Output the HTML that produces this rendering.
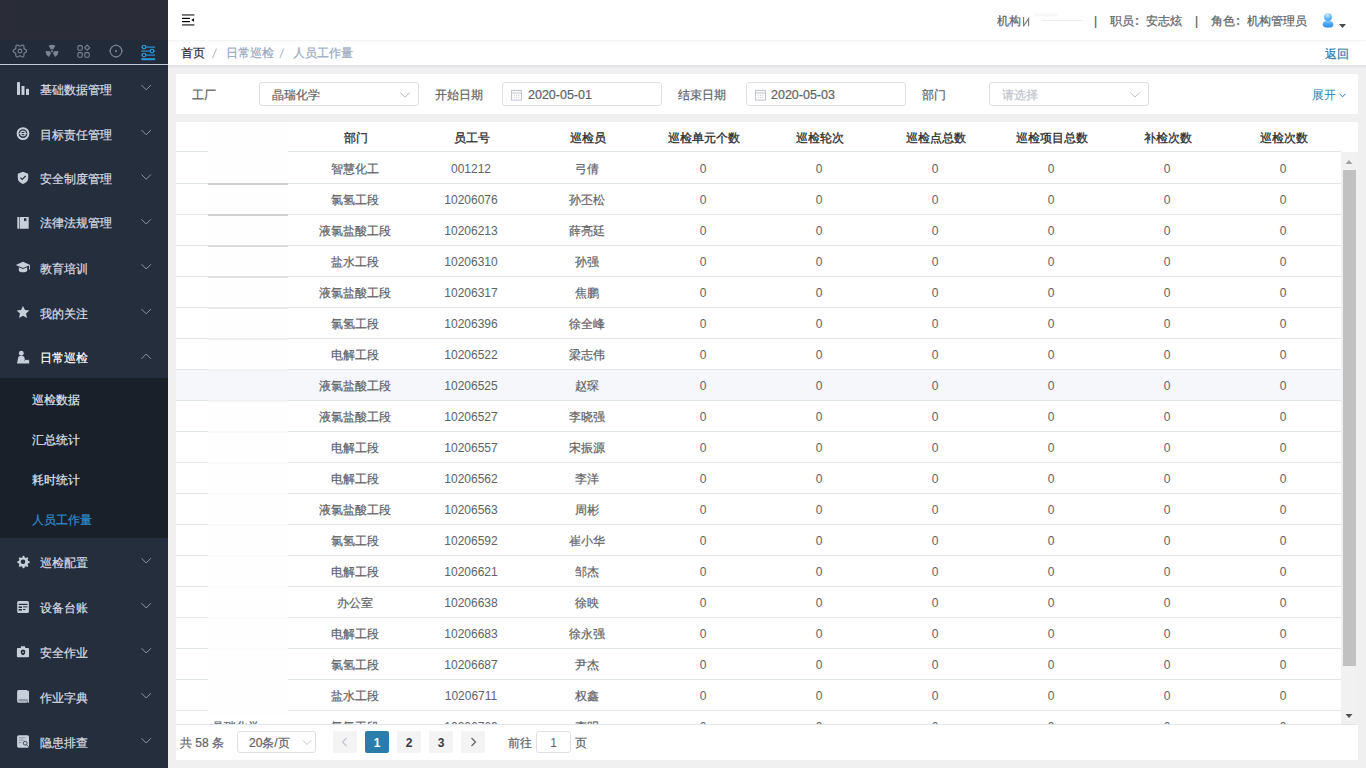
<!DOCTYPE html>
<html><head><meta charset="utf-8">
<style>
*{box-sizing:border-box;margin:0;padding:0}
html,body{width:1366px;height:768px;overflow:hidden;background:#f0f0f0;font-family:"Liberation Sans",sans-serif;font-size:12px;color:#606266}
#side{position:absolute;left:0;top:0;width:168px;height:768px;background:#252e3c;overflow:hidden}
#logo{position:absolute;left:0;top:0;width:168px;height:40px;background:#2a2d37}
#icons{position:absolute;left:0;top:40px;width:168px;height:24px;background:#222b39}
#iline{position:absolute;left:0;top:64px;width:168px;height:1px;background:#c3cad6}
.mi{position:absolute;left:0;width:168px;height:45px;color:#c9ced6}
.mi .t{position:absolute;left:40px;top:0;height:45px;line-height:45px;white-space:nowrap}
.ic{position:absolute;left:16px;width:14px;height:14px}
.ar{position:absolute;left:140px;width:12px;height:7px}
#sub{position:absolute;left:0;top:378px;width:168px;height:160px;background:#19202a}
.si{position:absolute;left:32px;height:40px;line-height:40px;color:#dfe3ea;white-space:nowrap}
#hdr{position:absolute;left:168px;top:0;width:1198px;height:40px;background:#fff}
#bc{position:absolute;left:168px;top:40px;width:1198px;height:25px;background:#fff;box-shadow:0 1px 2px rgba(0,0,0,.15)}
.ht{position:absolute;top:0;height:40px;line-height:40px;white-space:nowrap;color:#606266}
.bt{position:absolute;top:0;height:25px;line-height:25px;white-space:nowrap}
#fp{position:absolute;left:176px;top:74px;width:1182px;height:40px;background:#fff}
.lb{position:absolute;top:0;height:40px;line-height:40px;color:#606266;white-space:nowrap}
.inp{position:absolute;top:8px;width:160px;height:24px;border:1px solid #dcdfe6;border-radius:3px;background:#fff}
.inp .v{position:absolute;left:12px;top:0;line-height:22px;color:#606266;white-space:nowrap}
#tp{position:absolute;left:176px;top:122px;width:1182px;height:638px;background:#fff;overflow:hidden}
.hrow{position:absolute;left:0;top:0;width:1166px;height:29px}
.th{position:absolute;top:0;width:116px;height:29px;line-height:29px;text-align:center;font-weight:bold;color:#303133;white-space:nowrap}
.hline{position:absolute;left:0;top:29px;width:1166px;height:1px;background:#ebeef5}
.tr{position:absolute;left:0;width:1166px;background:#fff}
.tr.hov{background:#f5f7fa}
.td{position:absolute;top:0;width:116px;height:100%;line-height:30px;text-align:center;white-space:nowrap;color:#606266}
.td.c1{left:0;width:122px}
.rline{position:absolute;left:0;width:1166px;height:1px;background:#ebeef5}
#blur{position:absolute;left:32px;top:1px;width:80px;height:593px;background:#fefefe}
.sa{position:absolute;left:141px;top:8px}
.cal{position:absolute;left:7px;top:6px}
.dt{font-size:12.5px}
.mi .t{padding-top:3px}
.si{padding-top:2px}
.td{padding-top:1px}
.pgt{position:absolute;top:609px;height:22px;line-height:22px;white-space:nowrap;color:#606266;padding-top:1px}
.psel{position:absolute;left:61px;top:609px;width:79px;height:22px;border:1px solid #dcdfe6;border-radius:3px}
.psel .v{position:absolute;left:11px;top:0;line-height:20px;color:#606266;white-space:nowrap;padding-top:1px}
.pb{position:absolute;top:609px;width:24px;height:22px;line-height:22px;background:#f4f4f5;border-radius:2px;text-align:center;font-weight:bold;color:#303133;font-size:12px}
.pb svg{position:absolute;left:0;top:0}
.pb.act{background:#2a7cab;color:#fff}
.pin{position:absolute;left:360px;top:609px;width:35px;height:22px;line-height:20px;border:1px solid #dcdfe6;border-radius:3px;text-align:center;color:#606266}
#tbody{position:absolute;left:0;top:30px;width:1165px;height:572px;overflow:hidden}
.bl{position:absolute;left:0;width:80px;height:2px}
#bc{border-top:1px solid #f3f3f3}
.th{padding-top:2px}
.mi{color:#d9dde4}
.sa{left:139px}
.pb{padding-top:1px;color:#3a3b3d}
.pb.act{color:#fff}
.pin{padding-top:1px}
.td{margin-left:-1px}
.ht{padding-top:1px}

.bl{filter:blur(.7px);height:2px}
.th{font-weight:500;color:#2a2b2d;-webkit-text-stroke:.3px #2a2b2d}
.cl{display:inline-block;width:12px;text-indent:1px;font-weight:bold;color:#707276}
.lb{padding-top:1px}
.inp .v{padding-top:1px}
.td,.lb,.ht,.bt,.si,.mi .t,.pgt,.inp .v,.psel .v,.pin{-webkit-text-stroke:.2px currentColor}
#bc{box-shadow:none;border-top:1px solid #f3f4f4;background:linear-gradient(#f9fafa,#fff 3px)}
#shd{position:absolute;left:168px;top:65px;width:1198px;height:3px;background:linear-gradient(#dde2e9 0,#dde2e9 1px,#e4e4e4 1px,#e4e4e4 2px,#ebebeb 2px)}
.rline,.hline{background:#e1e6ec}
.td.n,.dt,.pin{-webkit-text-stroke:0}

</style></head><body>
<div id="side">
<div id="logo"><div style="position:absolute;left:21px;top:5px;width:54px;height:24px;background:#282c36;box-shadow:0 0 3px 1px #292d37"></div></div>
<div id="icons"></div>
<div id="iline"></div>
<div class="mi" style="top:65px"><div class="t">基础数据管理</div></div>
<div class="mi" style="top:110px"><div class="t">目标责任管理</div></div>
<div class="mi" style="top:154px"><div class="t">安全制度管理</div></div>
<div class="mi" style="top:198px"><div class="t">法律法规管理</div></div>
<div class="mi" style="top:244px"><div class="t">教育培训</div></div>
<div class="mi" style="top:289px"><div class="t">我的关注</div></div>
<div class="mi" style="top:333px;color:#fff"><div class="t">日常巡检</div></div>
<div id="sub">
<div class="si" style="top:0">巡检数据</div>
<div class="si" style="top:40px">汇总统计</div>
<div class="si" style="top:80px">耗时统计</div>
<div class="si" style="top:120px;color:#2d8dcd">人员工作量</div>
</div>
<div class="mi" style="top:538px"><div class="t">巡检配置</div></div>
<div class="mi" style="top:583px"><div class="t">设备台账</div></div>
<div class="mi" style="top:628px"><div class="t">安全作业</div></div>
<div class="mi" style="top:673px"><div class="t">作业字典</div></div>
<div class="mi" style="top:718px"><div class="t">隐患排查</div></div>
<svg width="168" height="768" viewBox="0 0 168 768" style="position:absolute;left:0;top:0">
<!-- top icon row -->
<path d="M26.60 51.00 L26.54 51.35 L26.38 51.68 L26.13 51.99 L25.81 52.26 L25.45 52.49 L25.09 52.69 L24.75 52.86 L24.45 53.03 L24.22 53.20 L24.06 53.40 L23.96 53.64 L23.93 53.93 L23.93 54.27 L23.95 54.65 L23.97 55.07 L23.94 55.49 L23.87 55.90 L23.73 56.27 L23.52 56.58 L23.25 56.80 L22.92 56.93 L22.55 56.96 L22.16 56.89 L21.77 56.75 L21.39 56.55 L21.03 56.34 L20.71 56.13 L20.42 55.95 L20.15 55.84 L19.90 55.80 L19.65 55.84 L19.38 55.95 L19.09 56.13 L18.77 56.34 L18.41 56.55 L18.03 56.75 L17.64 56.89 L17.25 56.96 L16.88 56.93 L16.55 56.80 L16.28 56.58 L16.07 56.27 L15.93 55.90 L15.86 55.49 L15.83 55.07 L15.85 54.65 L15.87 54.27 L15.87 53.93 L15.84 53.64 L15.74 53.40 L15.58 53.20 L15.35 53.03 L15.05 52.86 L14.71 52.69 L14.35 52.49 L13.99 52.26 L13.67 51.99 L13.42 51.68 L13.26 51.35 L13.20 51.00 L13.26 50.65 L13.42 50.32 L13.67 50.01 L13.99 49.74 L14.35 49.51 L14.71 49.31 L15.05 49.14 L15.35 48.97 L15.58 48.80 L15.74 48.60 L15.84 48.36 L15.87 48.07 L15.87 47.73 L15.85 47.35 L15.83 46.93 L15.86 46.51 L15.93 46.10 L16.07 45.73 L16.28 45.42 L16.55 45.20 L16.88 45.07 L17.25 45.04 L17.64 45.11 L18.03 45.25 L18.41 45.45 L18.77 45.66 L19.09 45.87 L19.38 46.05 L19.65 46.16 L19.90 46.20 L20.15 46.16 L20.42 46.05 L20.71 45.87 L21.03 45.66 L21.39 45.45 L21.77 45.25 L22.16 45.11 L22.55 45.04 L22.92 45.07 L23.25 45.20 L23.52 45.42 L23.73 45.73 L23.87 46.10 L23.94 46.51 L23.97 46.93 L23.95 47.35 L23.93 47.73 L23.93 48.07 L23.96 48.36 L24.06 48.60 L24.22 48.80 L24.45 48.97 L24.75 49.14 L25.09 49.31 L25.45 49.51 L25.81 49.74 L26.13 50.01 L26.38 50.32 L26.54 50.65 L26.60 51.00Z" fill="none" stroke="#7b8493" stroke-width="1.15"/>
<circle cx="19.9" cy="51" r="1.9" fill="none" stroke="#7b8493" stroke-width="1.1"/>
<path d="M48.61 45.87A6.40 6.40 0 0 1 55.39 45.87L53.01 49.69A1.90 1.90 0 0 0 50.99 49.69ZM49.00 56.95A6.40 6.40 0 0 1 45.60 51.08L50.10 51.23A1.90 1.90 0 0 0 51.11 52.98ZM58.40 51.08A6.40 6.40 0 0 1 55.00 56.95L52.89 52.98A1.90 1.90 0 0 0 53.90 51.23Z" fill="#7b8493"/>
<rect x="51.1" y="50.4" width="1.8" height="1.8" fill="#7b8493"/>
<g fill="none" stroke="#7b8493" stroke-width="1.1">
<rect x="77.9" y="45.6" width="4.4" height="4.6" rx="1.2"/>
<rect x="77.9" y="52.6" width="4.4" height="4.6" rx="1.2"/>
<rect x="84.8" y="52.6" width="4.4" height="4.6" rx="1.2"/>
<path d="M87.2 45.1l2.5 2.6-2.5 2.6-2.5-2.6z"/>
<circle cx="116" cy="51.1" r="5.8"/>
</g>
<g fill="#7b8493">
<circle cx="116" cy="51.1" r="1.1"/>
<rect x="115.5" y="44.4" width="1" height="1.2"/><rect x="115.5" y="56.6" width="1" height="1.2"/>
<rect x="109.3" y="50.6" width="1.2" height="1"/><rect x="121.5" y="50.6" width="1.2" height="1"/>
</g>
<g fill="#2a6f9e">
<rect x="141.3" y="46.2" width="13.8" height="1.8"/><rect x="141.3" y="50.2" width="13.8" height="1.8"/><rect x="141.3" y="54.2" width="13.8" height="1.8"/>
</g>
<g fill="#222b39" stroke="#2e9ee0" stroke-width="1.1">
<circle cx="144" cy="47.1" r="1.8"/><circle cx="152" cy="51.1" r="1.8"/><circle cx="144" cy="55.1" r="1.8"/>
</g>
<rect x="141.3" y="58.2" width="13.8" height="2" fill="#2b9ad8"/>
<!-- menu icons -->
<g fill="#c7cfda">
<rect x="17" y="82" width="3" height="13" rx=".4"/><rect x="21.5" y="86" width="3" height="9" rx=".4"/><rect x="26" y="88.8" width="3" height="6.2" rx=".4"/>
</g>
<g>
<circle cx="23" cy="133.6" r="5.4" fill="none" stroke="#c7cfda" stroke-width="2"/>
<circle cx="23" cy="133.6" r="2.4" fill="none" stroke="#c7cfda" stroke-width="1.2"/>
<path d="M19.2 133.6h7.6" stroke="#c7cfda" stroke-width="1.1"/>
</g>
<path d="M23 171.8l5.2 1.9v4.4c0 3.2-2.3 5-5.2 6-2.9-1-5.2-2.8-5.2-6v-4.4z" fill="#c7cfda"/>
<path d="M20.3 177.6l1.9 1.8 3.5-3.4" fill="none" stroke="#252e3c" stroke-width="1.2"/>
<g fill="#c7cfda">
<rect x="17.3" y="217" width="2" height="11.8" rx=".5"/>
<rect x="19.8" y="217" width="8.9" height="11.8" rx=".6"/>
</g>
<path d="M24 218.2v3.2l1.2-.9 1.2.9v-3.2" fill="#252e3c"/>
<g fill="#c7cfda">
<path d="M23 261.7l7.2 3.2-7.2 3.2-7.2-3.2z"/>
<path d="M18.8 267.2v3.6c1.2 2 7.2 2 8.4 0v-3.6l-4.2 1.9z"/>
<rect x="29.1" y="265" width=".9" height="4.6"/>
</g>
<path d="M23 305.9l1.95 4.1 4.35.5-3.25 3 .9 4.4-3.95-2.2-3.95 2.2.9-4.4-3.25-3 4.35-.5z" fill="#c7cfda"/>
<g fill="#c7cfda">
<circle cx="21.3" cy="353.2" r="2.4"/>
<path d="M17 363.5l1.3-6.3c.4-1 1.4-1.5 3-1.5s2.6.5 3 1.5l.6 2.5h4.3v3.8z"/>
</g>
<path d="M24.5 360.5l1.5-1.6 2.6 1.2" fill="none" stroke="#252e3c" stroke-width=".8"/>
<path d="M23 555.7l1.3.3.4 1.4 1.3.6 1.3-.7 1 1-.7 1.3.6 1.3 1.4.4v1.6l-1.4.4-.6 1.3.7 1.3-1 1-1.3-.7-1.3.6-.4 1.4h-1.6l-.4-1.4-1.3-.6-1.3.7-1-1 .7-1.3-.6-1.3-1.4-.4v-1.6l1.4-.4.6-1.3-.7-1.3 1-1 1.3.7 1.3-.6.4-1.4z" fill="#c7cfda"/>
<circle cx="23" cy="561.8" r="2.3" fill="#252e3c"/>
<rect x="17.2" y="600.9" width="11.7" height="12.1" rx="1.5" fill="#c7cfda"/>
<g fill="#252e3c"><rect x="18.6" y="603.8" width="8.9" height="1.2"/><rect x="18.6" y="606.4" width="3.4" height="1.6"/><rect x="18.6" y="609" width="3.4" height="1.6"/><rect x="23" y="606.4" width="4.5" height="1"/><rect x="23" y="609" width="2.5" height="1"/></g>
<g fill="#c7cfda"><rect x="16.9" y="648" width="12.1" height="9.2" rx="1"/><rect x="20.8" y="646.3" width="4.4" height="2.5" rx=".5"/></g>
<path d="M23 649.6l2.2.8v2c0 1.5-1 2.3-2.2 2.8-1.2-.5-2.2-1.3-2.2-2.8v-2z" fill="#252e3c"/>
<circle cx="23" cy="652.3" r=".8" fill="#c7cfda"/>
<g fill="#c7cfda"><rect x="17.1" y="689.9" width="10.9" height="12.8" rx="1.6"/><rect x="28" y="690.8" width="1" height="11.9"/></g>
<rect x="18.4" y="699" width="9.8" height="2.4" rx="1" fill="#8e98a8"/>
<rect x="17.1" y="735.2" width="11.9" height="12.5" rx="1.6" fill="#c7cfda"/>
<g fill="#8e98a8"><rect x="18.8" y="737.3" width="6.8" height="1.1"/><rect x="18.8" y="739.6" width="5" height="1.1"/><rect x="18.8" y="742" width="3" height="1.1"/></g>
<circle cx="25.2" cy="743.2" r="1.9" fill="none" stroke="#3e4858" stroke-width="1"/>
<path d="M26.5 744.6l2 2" stroke="#3e4858" stroke-width="1"/>
<!-- chevrons -->
<g fill="none" stroke="#8d95a1" stroke-width="1">
<path d="M141.5 85l4.7 4.8 4.7-4.8"/>
<path d="M141.5 130l4.7 4.8 4.7-4.8"/>
<path d="M141.5 174.5l4.7 4.8 4.7-4.8"/>
<path d="M141.5 219.3l4.7 4.8 4.7-4.8"/>
<path d="M141.5 264.2l4.7 4.8 4.7-4.8"/>
<path d="M141.5 309l4.7 4.8 4.7-4.8"/>
<path d="M141.5 358.8l4.7-4.8 4.7 4.8"/>
<path d="M141.5 558.2l4.7 4.8 4.7-4.8"/>
<path d="M141.5 603.2l4.7 4.8 4.7-4.8"/>
<path d="M141.5 648.2l4.7 4.8 4.7-4.8"/>
<path d="M141.5 693.2l4.7 4.8 4.7-4.8"/>
<path d="M141.5 738.2l4.7 4.8 4.7-4.8"/>
</g>
</svg>
</div>
<div id="hdr">
<svg width="20" height="20" viewBox="0 0 20 20" style="position:absolute;left:12px;top:10px">
<rect x="2" y="4.2" width="12.4" height="1.5" fill="#555"/>
<rect x="2" y="7.8" width="8" height="1.2" fill="#000"/>
<rect x="2" y="11" width="8" height="1.2" fill="#000"/>
<path d="M14 8.2L11.3 10 14 11.8z" fill="#000"/>
<rect x="2" y="14.1" width="12.4" height="1.6" fill="#5a5a5a"/>
</svg>
<div class="ht" style="left:829px">机构</div>
<svg width="10" height="12" viewBox="0 0 10 12" style="position:absolute;left:854px;top:16px"><path d="M1.6 1v9.4M1.6 10l5-7.4v7.6" fill="none" stroke="#777" stroke-width="1.1"/></svg>
<div style="position:absolute;left:866px;top:14px;width:24px;height:2px;background:#f2f2f2;filter:blur(1px)"></div>
<div style="position:absolute;left:874px;top:20px;width:40px;height:1px;background:#ececec;filter:blur(.6px)"></div>
<div class="ht" style="left:926px;color:#555">|</div>
<div class="ht" style="left:942px">职员<span class="cl">:</span>安志炫</div>
<div class="ht" style="left:1027px;color:#555">|</div>
<div class="ht" style="left:1043px">角色<span class="cl">:</span>机构管理员</div>
<svg width="30" height="20" viewBox="0 0 30 20" style="position:absolute;left:1152px;top:10px">
<defs><radialGradient id="ug1" cx=".45" cy=".25" r=".8"><stop offset="0" stop-color="#d8f0ff"/><stop offset=".5" stop-color="#6cc0fa"/><stop offset="1" stop-color="#3994f0"/></radialGradient>
<linearGradient id="ug2" x1="0" y1="0" x2="0" y2="1"><stop offset="0" stop-color="#8fd2ff"/><stop offset=".45" stop-color="#4aa6f6"/><stop offset="1" stop-color="#2f8cf2"/></linearGradient></defs>
<path d="M2.7 14.6C2.7 11.6 5 10.5 8 10.5S13.3 11.6 13.3 14.6 11 17.7 8 17.7 2.7 17 2.7 14.6z" fill="url(#ug2)"/>
<circle cx="8" cy="7.1" r="3.9" fill="url(#ug1)"/>
<path d="M19 14.1h7l-3.5 3.9z" fill="#4a4a4a"/>
</svg>
</div>
<div id="bc">
<div class="bt" style="left:13px;color:#2b2b2b">首页</div>
<svg width="80" height="25" viewBox="0 0 80 25" style="position:absolute;left:40px;top:0"><path d="M8.5 7.5L4.6 17.2M75.7 7.5L71.8 17.2" stroke="#c3c8d2" stroke-width="1.3"/></svg>
<div class="bt" style="left:58px;color:#97a8be">日常巡检</div>

<div class="bt" style="left:125px;color:#97a8be">人员工作量</div>
<div class="bt" style="left:1157px;color:#2b7bab;padding-top:1px">返回</div>
</div>
<div id="shd"></div>
<div id="fp">
<div class="lb" style="left:16px">工厂</div>
<div class="inp" style="left:83px"><div class="v">晶瑞化学</div><svg class="sa" width="12" height="8" viewBox="0 0 12 8"><path d="M1.2 1.5l4.8 4.6 4.8-4.6" fill="none" stroke="#b8bcc4" stroke-width="1"/></svg></div>
<div class="lb" style="left:259px">开始日期</div>
<div class="inp" style="left:326px"><svg class="cal" width="12" height="12" viewBox="0 0 12 12"><rect x="1.5" y="1.5" width="10" height="9.6" fill="none" stroke="#c0c4cc" stroke-width="1"/><rect x="1.5" y="3.5" width="10" height="1" fill="#c0c4cc"/><g fill="#c6cad2"><rect x="3.6" y="5.9" width="1" height="1"/><rect x="6" y="5.9" width="1" height="1"/><rect x="8.4" y="5.9" width="1" height="1"/><rect x="3.6" y="8" width="1" height="1"/><rect x="6" y="8" width="1" height="1"/><rect x="8.4" y="8" width="1" height="1"/></g><rect x="3.6" y=".5" width="1" height="1.6" fill="#c0c4cc"/><rect x="8.4" y=".5" width="1" height="1.6" fill="#c0c4cc"/></svg><div class="v dt" style="left:25px">2020-05-01</div></div>
<div class="lb" style="left:502px">结束日期</div>
<div class="inp" style="left:570px"><svg class="cal" width="12" height="12" viewBox="0 0 12 12"><rect x="1.5" y="1.5" width="10" height="9.6" fill="none" stroke="#c0c4cc" stroke-width="1"/><rect x="1.5" y="3.5" width="10" height="1" fill="#c0c4cc"/><g fill="#c6cad2"><rect x="3.6" y="5.9" width="1" height="1"/><rect x="6" y="5.9" width="1" height="1"/><rect x="8.4" y="5.9" width="1" height="1"/><rect x="3.6" y="8" width="1" height="1"/><rect x="6" y="8" width="1" height="1"/><rect x="8.4" y="8" width="1" height="1"/></g><rect x="3.6" y=".5" width="1" height="1.6" fill="#c0c4cc"/><rect x="8.4" y=".5" width="1" height="1.6" fill="#c0c4cc"/></svg><div class="v dt" style="left:24px">2020-05-03</div></div>
<div class="lb" style="left:746px">部门</div>
<div class="inp" style="left:813px"><div class="v" style="color:#c0c4cc">请选择</div><svg class="sa" width="12" height="8" viewBox="0 0 12 8"><path d="M1.2 1.5l4.8 4.6 4.8-4.6" fill="none" stroke="#b8bcc4" stroke-width="1"/></svg></div>
<div class="lb" style="left:1136px;color:#2f80ad;-webkit-text-stroke:0">展开</div>
<svg width="10" height="8" viewBox="0 0 10 8" style="position:absolute;left:1162px;top:18px"><path d="M1.5 1.8l3 3 3-3" fill="none" stroke="#2b7bab" stroke-width="1"/></svg>
</div>
<div id="tp">
<div class="hrow">
<div class="th" style="left:122px">部门</div>
<div class="th" style="left:238px">员工号</div>
<div class="th" style="left:354px">巡检员</div>
<div class="th" style="left:470px">巡检单元个数</div>
<div class="th" style="left:586px">巡检轮次</div>
<div class="th" style="left:702px">巡检点总数</div>
<div class="th" style="left:818px">巡检项目总数</div>
<div class="th" style="left:934px">补检次数</div>
<div class="th" style="left:1050px">巡检次数</div>
</div>
<div class="hline"></div>
<div id="tbody">
<div class="tr" style="top:1px;height:30px">
<div class="td c1">晶瑞化学</div>
<div class="td" style="left:122px">智慧化工</div>
<div class="td n" style="left:238px">001212</div>
<div class="td" style="left:354px">弓倩</div>
<div class="td n" style="left:470px">0</div>
<div class="td n" style="left:586px">0</div>
<div class="td n" style="left:702px">0</div>
<div class="td n" style="left:818px">0</div>
<div class="td n" style="left:934px">0</div>
<div class="td n" style="left:1050px">0</div>
</div>
<div class="rline" style="top:31px"></div>
<div class="tr" style="top:32px;height:30px">
<div class="td c1">晶瑞化学</div>
<div class="td" style="left:122px">氯氢工段</div>
<div class="td n" style="left:238px">10206076</div>
<div class="td" style="left:354px">孙丕松</div>
<div class="td n" style="left:470px">0</div>
<div class="td n" style="left:586px">0</div>
<div class="td n" style="left:702px">0</div>
<div class="td n" style="left:818px">0</div>
<div class="td n" style="left:934px">0</div>
<div class="td n" style="left:1050px">0</div>
</div>
<div class="rline" style="top:62px"></div>
<div class="tr" style="top:63px;height:30px">
<div class="td c1">晶瑞化学</div>
<div class="td" style="left:122px">液氯盐酸工段</div>
<div class="td n" style="left:238px">10206213</div>
<div class="td" style="left:354px">薛亮廷</div>
<div class="td n" style="left:470px">0</div>
<div class="td n" style="left:586px">0</div>
<div class="td n" style="left:702px">0</div>
<div class="td n" style="left:818px">0</div>
<div class="td n" style="left:934px">0</div>
<div class="td n" style="left:1050px">0</div>
</div>
<div class="rline" style="top:93px"></div>
<div class="tr" style="top:94px;height:30px">
<div class="td c1">晶瑞化学</div>
<div class="td" style="left:122px">盐水工段</div>
<div class="td n" style="left:238px">10206310</div>
<div class="td" style="left:354px">孙强</div>
<div class="td n" style="left:470px">0</div>
<div class="td n" style="left:586px">0</div>
<div class="td n" style="left:702px">0</div>
<div class="td n" style="left:818px">0</div>
<div class="td n" style="left:934px">0</div>
<div class="td n" style="left:1050px">0</div>
</div>
<div class="rline" style="top:124px"></div>
<div class="tr" style="top:125px;height:30px">
<div class="td c1">晶瑞化学</div>
<div class="td" style="left:122px">液氯盐酸工段</div>
<div class="td n" style="left:238px">10206317</div>
<div class="td" style="left:354px">焦鹏</div>
<div class="td n" style="left:470px">0</div>
<div class="td n" style="left:586px">0</div>
<div class="td n" style="left:702px">0</div>
<div class="td n" style="left:818px">0</div>
<div class="td n" style="left:934px">0</div>
<div class="td n" style="left:1050px">0</div>
</div>
<div class="rline" style="top:155px"></div>
<div class="tr" style="top:156px;height:30px">
<div class="td c1">晶瑞化学</div>
<div class="td" style="left:122px">氯氢工段</div>
<div class="td n" style="left:238px">10206396</div>
<div class="td" style="left:354px">徐全峰</div>
<div class="td n" style="left:470px">0</div>
<div class="td n" style="left:586px">0</div>
<div class="td n" style="left:702px">0</div>
<div class="td n" style="left:818px">0</div>
<div class="td n" style="left:934px">0</div>
<div class="td n" style="left:1050px">0</div>
</div>
<div class="rline" style="top:186px"></div>
<div class="tr" style="top:187px;height:30px">
<div class="td c1">晶瑞化学</div>
<div class="td" style="left:122px">电解工段</div>
<div class="td n" style="left:238px">10206522</div>
<div class="td" style="left:354px">梁志伟</div>
<div class="td n" style="left:470px">0</div>
<div class="td n" style="left:586px">0</div>
<div class="td n" style="left:702px">0</div>
<div class="td n" style="left:818px">0</div>
<div class="td n" style="left:934px">0</div>
<div class="td n" style="left:1050px">0</div>
</div>
<div class="rline" style="top:217px"></div>
<div class="tr hov" style="top:218px;height:30px">
<div class="td c1">晶瑞化学</div>
<div class="td" style="left:122px">液氯盐酸工段</div>
<div class="td n" style="left:238px">10206525</div>
<div class="td" style="left:354px">赵琛</div>
<div class="td n" style="left:470px">0</div>
<div class="td n" style="left:586px">0</div>
<div class="td n" style="left:702px">0</div>
<div class="td n" style="left:818px">0</div>
<div class="td n" style="left:934px">0</div>
<div class="td n" style="left:1050px">0</div>
</div>
<div class="rline" style="top:248px"></div>
<div class="tr" style="top:249px;height:30px">
<div class="td c1">晶瑞化学</div>
<div class="td" style="left:122px">液氯盐酸工段</div>
<div class="td n" style="left:238px">10206527</div>
<div class="td" style="left:354px">李晓强</div>
<div class="td n" style="left:470px">0</div>
<div class="td n" style="left:586px">0</div>
<div class="td n" style="left:702px">0</div>
<div class="td n" style="left:818px">0</div>
<div class="td n" style="left:934px">0</div>
<div class="td n" style="left:1050px">0</div>
</div>
<div class="rline" style="top:279px"></div>
<div class="tr" style="top:280px;height:30px">
<div class="td c1">晶瑞化学</div>
<div class="td" style="left:122px">电解工段</div>
<div class="td n" style="left:238px">10206557</div>
<div class="td" style="left:354px">宋振源</div>
<div class="td n" style="left:470px">0</div>
<div class="td n" style="left:586px">0</div>
<div class="td n" style="left:702px">0</div>
<div class="td n" style="left:818px">0</div>
<div class="td n" style="left:934px">0</div>
<div class="td n" style="left:1050px">0</div>
</div>
<div class="rline" style="top:310px"></div>
<div class="tr" style="top:311px;height:30px">
<div class="td c1">晶瑞化学</div>
<div class="td" style="left:122px">电解工段</div>
<div class="td n" style="left:238px">10206562</div>
<div class="td" style="left:354px">李洋</div>
<div class="td n" style="left:470px">0</div>
<div class="td n" style="left:586px">0</div>
<div class="td n" style="left:702px">0</div>
<div class="td n" style="left:818px">0</div>
<div class="td n" style="left:934px">0</div>
<div class="td n" style="left:1050px">0</div>
</div>
<div class="rline" style="top:341px"></div>
<div class="tr" style="top:342px;height:30px">
<div class="td c1">晶瑞化学</div>
<div class="td" style="left:122px">液氯盐酸工段</div>
<div class="td n" style="left:238px">10206563</div>
<div class="td" style="left:354px">周彬</div>
<div class="td n" style="left:470px">0</div>
<div class="td n" style="left:586px">0</div>
<div class="td n" style="left:702px">0</div>
<div class="td n" style="left:818px">0</div>
<div class="td n" style="left:934px">0</div>
<div class="td n" style="left:1050px">0</div>
</div>
<div class="rline" style="top:372px"></div>
<div class="tr" style="top:373px;height:30px">
<div class="td c1">晶瑞化学</div>
<div class="td" style="left:122px">氯氢工段</div>
<div class="td n" style="left:238px">10206592</div>
<div class="td" style="left:354px">崔小华</div>
<div class="td n" style="left:470px">0</div>
<div class="td n" style="left:586px">0</div>
<div class="td n" style="left:702px">0</div>
<div class="td n" style="left:818px">0</div>
<div class="td n" style="left:934px">0</div>
<div class="td n" style="left:1050px">0</div>
</div>
<div class="rline" style="top:403px"></div>
<div class="tr" style="top:404px;height:30px">
<div class="td c1">晶瑞化学</div>
<div class="td" style="left:122px">电解工段</div>
<div class="td n" style="left:238px">10206621</div>
<div class="td" style="left:354px">邹杰</div>
<div class="td n" style="left:470px">0</div>
<div class="td n" style="left:586px">0</div>
<div class="td n" style="left:702px">0</div>
<div class="td n" style="left:818px">0</div>
<div class="td n" style="left:934px">0</div>
<div class="td n" style="left:1050px">0</div>
</div>
<div class="rline" style="top:434px"></div>
<div class="tr" style="top:435px;height:30px">
<div class="td c1">晶瑞化学</div>
<div class="td" style="left:122px">办公室</div>
<div class="td n" style="left:238px">10206638</div>
<div class="td" style="left:354px">徐映</div>
<div class="td n" style="left:470px">0</div>
<div class="td n" style="left:586px">0</div>
<div class="td n" style="left:702px">0</div>
<div class="td n" style="left:818px">0</div>
<div class="td n" style="left:934px">0</div>
<div class="td n" style="left:1050px">0</div>
</div>
<div class="rline" style="top:465px"></div>
<div class="tr" style="top:466px;height:30px">
<div class="td c1">晶瑞化学</div>
<div class="td" style="left:122px">电解工段</div>
<div class="td n" style="left:238px">10206683</div>
<div class="td" style="left:354px">徐永强</div>
<div class="td n" style="left:470px">0</div>
<div class="td n" style="left:586px">0</div>
<div class="td n" style="left:702px">0</div>
<div class="td n" style="left:818px">0</div>
<div class="td n" style="left:934px">0</div>
<div class="td n" style="left:1050px">0</div>
</div>
<div class="rline" style="top:496px"></div>
<div class="tr" style="top:497px;height:30px">
<div class="td c1">晶瑞化学</div>
<div class="td" style="left:122px">氯氢工段</div>
<div class="td n" style="left:238px">10206687</div>
<div class="td" style="left:354px">尹杰</div>
<div class="td n" style="left:470px">0</div>
<div class="td n" style="left:586px">0</div>
<div class="td n" style="left:702px">0</div>
<div class="td n" style="left:818px">0</div>
<div class="td n" style="left:934px">0</div>
<div class="td n" style="left:1050px">0</div>
</div>
<div class="rline" style="top:527px"></div>
<div class="tr" style="top:528px;height:30px">
<div class="td c1">晶瑞化学</div>
<div class="td" style="left:122px">盐水工段</div>
<div class="td n" style="left:238px">10206711</div>
<div class="td" style="left:354px">权鑫</div>
<div class="td n" style="left:470px">0</div>
<div class="td n" style="left:586px">0</div>
<div class="td n" style="left:702px">0</div>
<div class="td n" style="left:818px">0</div>
<div class="td n" style="left:934px">0</div>
<div class="td n" style="left:1050px">0</div>
</div>
<div class="rline" style="top:558px"></div>
<div class="tr" style="top:559px;height:30px">
<div class="td c1">晶瑞化学</div>
<div class="td" style="left:122px">氯氢工段</div>
<div class="td n" style="left:238px">10206769</div>
<div class="td" style="left:354px">李明</div>
<div class="td n" style="left:470px">0</div>
<div class="td n" style="left:586px">0</div>
<div class="td n" style="left:702px">0</div>
<div class="td n" style="left:818px">0</div>
<div class="td n" style="left:934px">0</div>
<div class="td n" style="left:1050px">0</div>
</div>
<div class="rline" style="top:589px"></div>
</div>
<div id="blur"><div style="position:absolute;left:0;top:247px;width:80px;height:31px;background:#f6f7fa"></div><div class="bl" style="top:60px;background:rgba(140,140,140,0.42)"></div><div class="bl" style="top:91px;background:rgba(140,140,140,0.38)"></div><div class="bl" style="top:122px;background:rgba(140,140,140,0.30)"></div><div class="bl" style="top:153px;background:rgba(140,140,140,0.24)"></div><div class="bl" style="top:184px;background:rgba(140,140,140,0.18)"></div><div class="bl" style="top:215px;background:rgba(140,140,140,0.13)"></div><div class="bl" style="top:246px;background:rgba(140,140,140,0.09)"></div><div class="bl" style="top:277px;background:rgba(140,140,140,0.06)"></div><div class="bl" style="top:308px;background:rgba(140,140,140,0.05)"></div><div class="bl" style="top:339px;background:rgba(140,140,140,0.04)"></div><div class="bl" style="top:370px;background:rgba(140,140,140,0.03)"></div><div class="bl" style="top:401px;background:rgba(140,140,140,0.03)"></div><div class="bl" style="top:432px;background:rgba(140,140,140,0.02)"></div><div class="bl" style="top:463px;background:rgba(140,140,140,0.02)"></div><div class="bl" style="top:494px;background:rgba(140,140,140,0.02)"></div><div class="bl" style="top:525px;background:rgba(140,140,140,0.02)"></div><div class="bl" style="top:556px;background:rgba(140,140,140,0.02)"></div></div>
<div style="position:absolute;left:0;top:602px;width:1182px;height:1px;background:#e1e6ec"></div>
<div style="position:absolute;left:1165px;top:0;width:17px;height:30px;background:#fff"></div>
<div style="position:absolute;left:1165px;top:30px;width:17px;height:572px;background:#f1f1f1"></div>
<svg width="17" height="572" viewBox="0 0 17 572" style="position:absolute;left:1165px;top:30px">
<path d="M4.5 12l3.5-4 3.5 4z" fill="#a3a3a3"/>
<rect x="2" y="18" width="13" height="496" fill="#c1c1c1"/>
<path d="M4.5 562l3.5 4 3.5-4z" fill="#505050"/>
</svg>
<div class="pgt" style="left:4px">共 58 条</div>
<div class="psel"><div class="v">20条/页</div><svg width="10" height="8" viewBox="0 0 10 8" style="position:absolute;left:64px;top:7px"><path d="M1 1.5l4 4 4-4" fill="none" stroke="#c0c4cc" stroke-width="1"/></svg></div>
<div class="pb" style="left:157px"><svg width="24" height="22" viewBox="0 0 24 22"><path d="M13.5 7l-4 4 4 4" fill="none" stroke="#c0c4cc" stroke-width="1.2"/></svg></div>
<div class="pb act" style="left:189px">1</div>
<div class="pb" style="left:221px">2</div>
<div class="pb" style="left:253px">3</div>
<div class="pb" style="left:285px"><svg width="24" height="22" viewBox="0 0 24 22"><path d="M10.5 7l4 4-4 4" fill="none" stroke="#606266" stroke-width="1.2"/></svg></div>
<div class="pgt" style="left:332px">前往</div>
<div class="pin">1</div>
<div class="pgt" style="left:399px">页</div>

</div>
</body></html>
